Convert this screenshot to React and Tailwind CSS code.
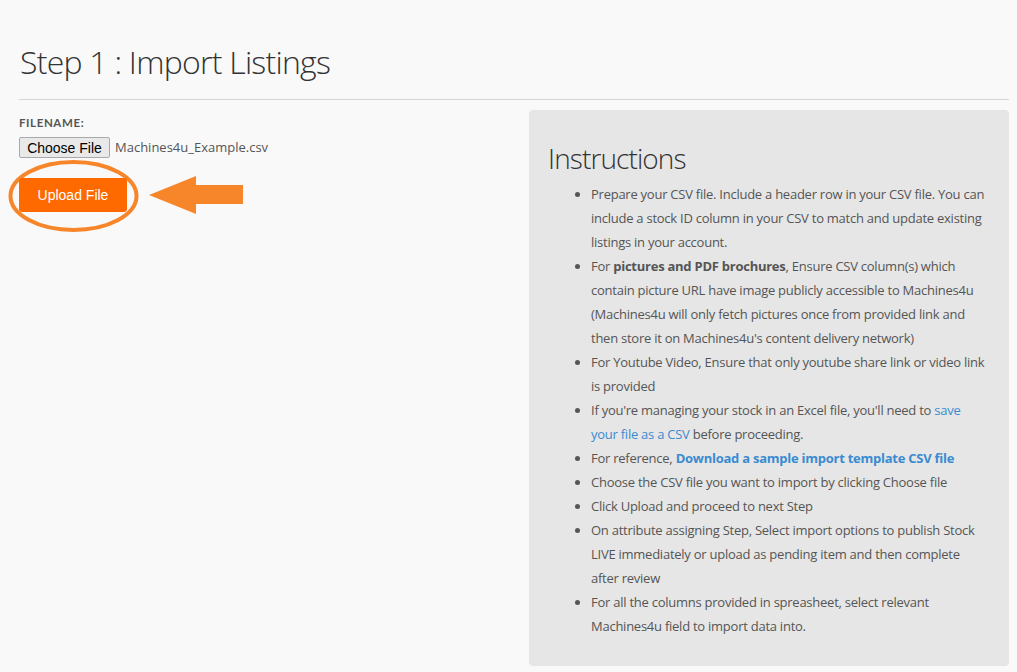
const items = [
  <>Prepare your CSV file. Include a header row in your CSV file. You can include a stock ID column in your CSV to match and update existing listings in your account.</>,
  <>
    For <b className="font-bold">pictures and PDF brochures</b>, Ensure CSV column(s) which contain picture URL have image publicly accessible to Machines4u (Machines4u will only fetch pictures once from provided link and then store it on Machines4u's content delivery network)
  </>,
  <>For Youtube Video, Ensure that only youtube share link or video link is provided</>,
  <>
    If you're managing your stock in an Excel file, you'll need to{" "}
    <a className="text-[#3a8bd0]">save your file as a CSV</a> before proceeding.
  </>,
  <>
    For reference,{" "}
    <a className="font-bold text-[#3a8bd0]">Download a sample import template CSV file</a>
  </>,
  <>Choose the CSV file you want to import by clicking Choose file</>,
  <>Click Upload and proceed to next Step</>,
  <>On attribute assigning Step, Select import options to publish Stock LIVE immediately or upload as pending item and then complete after review</>,
  <>For all the columns provided in spreasheet, select relevant Machines4u field to import data into.</>,
];

export default function App() {
  return (
    <div className="min-h-[672px] bg-[#f9f9f9] px-[19px] pt-[40px] font-['Open_Sans',sans-serif] text-[#555]">
      <h1 className="font-light text-[32px] leading-[44px] tracking-[-0.75px] text-[#333] pl-px">Step 1 : Import Listings</h1>
      <div className="mt-[15px] border-t border-[#d6d6d6] mr-[-11px]" />
      <div className="flex pt-[10px]">
        <div className="w-[510px] pt-[6px]">
          <div className="font-['Lato',sans-serif] font-bold text-[11.5px] leading-[14px] text-[#555] tracking-[0.6px]">FILENAME:</div>
          <div className="mt-[7px] flex items-center gap-[5px]">
            <button className="h-[21px] w-[91px] border border-[#a9a9a9] rounded-[2px] bg-[#e9e9e9] font-['Liberation_Sans',sans-serif] text-[14px] leading-[18px] text-black">
              Choose File
            </button>
            <span className="text-[13px] text-[#555]">Machines4u_Example.csv</span>
          </div>
          <div className="mt-[17px] flex items-center">
            <div className="relative">
              <button className="relative z-10 w-[108px] h-[34px] rounded-[3px] bg-[#ff6a00] font-['Liberation_Sans',sans-serif] text-[14px] text-white">
                Upload File
              </button>
              <svg className="absolute left-[-11px] top-[-18px]" width="132" height="74" viewBox="0 0 132 74">
                <ellipse cx="65.5" cy="36" rx="63" ry="34" fill="none" stroke="#f7862a" strokeWidth="4" />
              </svg>
            </div>
            <svg className="ml-[22px]" width="96" height="40" viewBox="0 0 96 40">
              <polygon points="0,20 47,1 47,10 94,10 94,29 47,29 47,39" fill="#f7862a" />
            </svg>
          </div>
        </div>
        <div className="ml-auto mr-[-11px] w-[480px] h-[556px] rounded-[4px] bg-[#e6e6e6] px-[19px] pt-[30px]">
          <h2 className="font-light text-[28px] leading-[36px] tracking-[-0.9px] text-[#333]">Instructions</h2>
          <ul className="mt-[6px] list-disc pl-[43px] text-[13px] leading-[24px] tracking-[-0.25px] marker:text-[#555]">
            {items.map((it, i) => (
              <li key={i}>{it}</li>
            ))}
          </ul>
        </div>
      </div>
    </div>
  );
}
